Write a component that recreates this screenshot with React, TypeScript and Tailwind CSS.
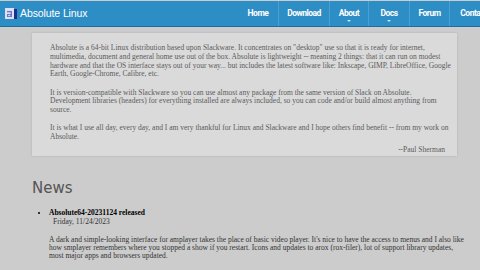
import React from 'react';

const nav = [
  { label: 'Home', w: 'w-[40px]', drop: false },
  { label: 'Download', w: 'w-[51px]', drop: false },
  { label: 'About', w: 'w-[39px]', drop: true },
  { label: 'Docs', w: 'w-[41px]', drop: true },
  { label: 'Forum', w: 'w-[40px]', drop: false },
  { label: 'Contact', w: 'w-[48px]', drop: false },
];

const Logo: React.FC = () => (
  <svg width="13" height="12" viewBox="0 0 13 12" className="shrink-0">
    <rect x="0" y="0" width="9" height="11" fill="#dde0f6" />
    <rect x="9" y="1" width="3" height="10" fill="#1f2e8c" />
    <rect x="2" y="3" width="5" height="1.3" fill="#6a78c4" />
    <rect x="5.6" y="3" width="1.4" height="6" fill="#6a78c4" />
    <rect x="2" y="6" width="4" height="3" fill="#6a78c4" />
    <rect x="3.2" y="6.9" width="2" height="1.2" fill="#dde0f6" />
  </svg>
);

const App: React.FC = () => {
  return (
    <div className="w-[480px] h-[270px] overflow-hidden bg-[#cccccc]">
      <header className="h-[26px] mt-px bg-[#2d8dc5] border-b border-[#1d6e9f] flex items-stretch">
        <div className="flex items-center gap-[2px] pl-[5px] w-[238px] shrink-0">
          <Logo />
          <span className="text-white text-[10.5px] font-['Liberation_Sans',Arial,sans-serif] tracking-[-0.1px]">
            Absolute Linux
          </span>
        </div>
        <nav className="flex items-stretch">
          {nav.map((n, i) => (
            <div
              key={n.label}
              className={`${n.w} shrink-0 relative flex items-center justify-center ${i > 0 ? 'border-l border-[#4aa0d2]' : ''}`}
            >
              <span className="text-white font-bold text-[8.5px] tracking-[-0.5px] font-['Roboto',sans-serif]">
                {n.label}
              </span>
              {n.drop && (
                <span className="absolute left-1/2 -translate-x-1/2 bottom-[4px] w-0 h-0 border-l-[2px] border-r-[2px] border-t-[2px] border-l-transparent border-r-transparent border-t-[#cfe6f5]" />
              )}
            </div>
          ))}
        </nav>
      </header>

      <div className="ml-[32px] mt-[6px] w-[425px] bg-[#dadada] shadow-[0_0_2px_rgba(0,0,0,0.15)] pl-[18px] pr-[2px] pt-[11px] pb-[1px] font-['Liberation_Serif','Times_New_Roman',serif] text-[7.5px] leading-[8.8px] text-[#5a5a5a]">
        <p>
          Absolute is a 64-bit Linux distribution based upon Slackware. It concentrates on "desktop" use so that it is ready for internet, multimedia, document and general home use out of the box. Absolute is lightweight -- meaning 2 things: that it can run on modest hardware and that the OS interface stays out of your way... but includes the latest software like: Inkscape, GIMP, LibreOffice, Google Earth, Google-Chrome, Calibre, etc.
        </p>
        <p className="mt-[9.5px]">
          It is version-compatible with Slackware so you can use almost any package from the same version of Slack on Absolute.
          <br />
          Development libraries (headers) for everything installed are always included, so you can code and/or build almost anything from source.
        </p>
        <p className="mt-[8.8px]">
          It is what I use all day, every day, and I am very thankful for Linux and Slackware and I hope others find benefit -- from my work on Absolute.
        </p>
        <p className="mt-[5px] text-right pr-[10px]">--Paul Sherman</p>
      </div>

      <h2 className="ml-[32px] mt-[25px] text-[15px] leading-[15px] text-[#555555] font-['DejaVu_Sans',sans-serif]">
        News
      </h2>

      <ul className="ml-[49px] mt-[13px] list-disc font-['Liberation_Serif','Times_New_Roman',serif] text-[7.5px] leading-[8.3px] text-[#222222]">
        <li className="font-bold text-black">
          Absolute64-20231124 released
          <div className="font-normal text-[#333333] pl-[4px]">Friday, 11/24/2023</div>
        </li>
      </ul>
      <p className="ml-[49px] mt-[10px] w-[416px] font-['Liberation_Serif','Times_New_Roman',serif] text-[7.5px] leading-[8.3px] text-[#333333]">
        A dark and simple-looking interface for amplayer takes the place of basic video player. It's nice to have the access to menus and I also like how smplayer remembers where you stopped a show if you restart. Icons and updates to arox (rox-filer), lot of support library updates, most major apps and browsers updated.
      </p>
    </div>
  );
};

export default App;
